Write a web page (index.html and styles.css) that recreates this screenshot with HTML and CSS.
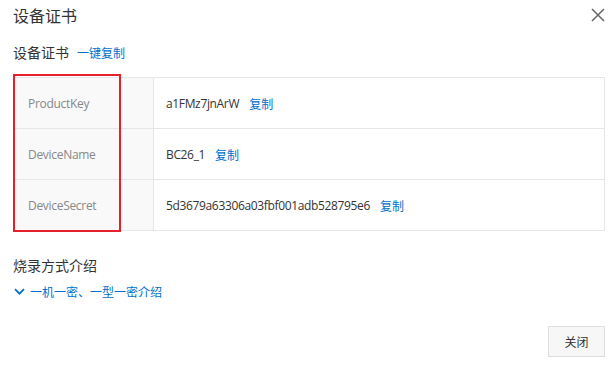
FILE: index.html
```html
<!DOCTYPE html>
<html lang="zh-CN">
<head>
<meta charset="utf-8">
<link rel="stylesheet" href="styles.css">
</head>
<body>
<div class="dialog">
  <div class="header">
    <div class="title">设备证书</div>
    <svg class="close" width="14" height="14" viewBox="0 0 14 14"><path d="M1 1L13 13M13 1L1 13" stroke="#666" stroke-width="1.5" fill="none"/></svg>
  </div>
  <div class="section-head">
    <span class="section-title">设备证书</span>
    <a class="link small">一键复制</a>
  </div>
  <div class="table-wrap">
    <div class="table">
      <div class="row">
        <div class="label">ProductKey</div>
        <div class="value"><span class="val">a1FMz7jnArW</span><a class="link copy">复制</a></div>
      </div>
      <div class="row">
        <div class="label">DeviceName</div>
        <div class="value"><span class="val">BC26_1</span><a class="link copy">复制</a></div>
      </div>
      <div class="row">
        <div class="label">DeviceSecret</div>
        <div class="value"><span class="val">5d3679a63306a03fbf001adb528795e6</span><a class="link copy">复制</a></div>
      </div>
    </div>
    <div class="highlight"></div>
  </div>
  <div class="section-title burn">烧录方式介绍</div>
  <a class="link small expand"><svg width="11" height="7" viewBox="0 0 11 7"><path d="M1 1.2L5.5 5.7L10 1.2" stroke="#0070cc" stroke-width="1.7" fill="none"/></svg>一机一密、一型一密介绍</a>
  <div class="footer">
    <button class="btn">关闭</button>
  </div>
</div>
</body>
</html>
```
FILE: styles.css
```css
* { box-sizing: border-box; }
html, body { margin: 0; padding: 0; background: #fff; }
body {
  font-family: "Open Sans", "Noto Sans CJK SC", sans-serif;
  color: #333;
  width: 613px;
  height: 370px;
  overflow: hidden;
}
.dialog { padding: 0 8px 0 13px; }
.header {
  display: flex;
  justify-content: space-between;
  align-items: center;
  height: 30px;
}
.title { font-family: "Noto Sans CJK SC", sans-serif; font-size: 16px; color: #333; line-height: 30px; }
.close { margin-right: 0; margin-top: 0; }
.section-head {
  margin-top: 12px;
  display: flex;
  align-items: baseline;
  gap: 8px;
  height: 22px;
}
.section-title { font-family: "Noto Sans CJK SC", sans-serif; font-size: 14px; color: #333; }
.link { color: #0070cc; text-decoration: none; font-family: "Noto Sans CJK SC", sans-serif; }
.small { font-size: 12px; }
.table-wrap { position: relative; margin-top: 13px; }
.table { border: 1px solid #e6e6e6; }
.row { display: flex; height: 51px; border-top: 1px solid #e6e6e6; }
.row:first-child { border-top: none; height: 50px; }
.label {
  width: 140px;
  background: #f9f9f9;
  border-right: 1px solid #e6e6e6;
  font-size: 12px;
  color: #888;
  display: flex;
  align-items: center;
  padding-left: 14px;
  letter-spacing: -0.3px;
}
.value {
  font-size: 12px;
  color: #333;
  display: flex;
  align-items: center;
  padding-left: 12px;
  gap: 10px;
}
.val { letter-spacing: -0.35px; }
.copy { font-size: 12px; }
.highlight {
  position: absolute;
  left: 0;
  top: -3px;
  width: 108px;
  height: 158px;
  border: 2px solid #e5202a;
}
.burn { display: block; margin-top: 24px; line-height: 20px; }
.expand { display: flex; align-items: center; gap: 5px; margin-top: 8px; margin-left: 1px; }
.footer { display: flex; justify-content: flex-end; margin-top: 26px; }
.btn {
  width: 57px;
  height: 31px;
  background: #f7f7f7;
  border: 1px solid #dedede;
  font-family: "Noto Sans CJK SC", sans-serif;
  font-size: 12px;
  color: #333;
  padding: 0;
}
```
